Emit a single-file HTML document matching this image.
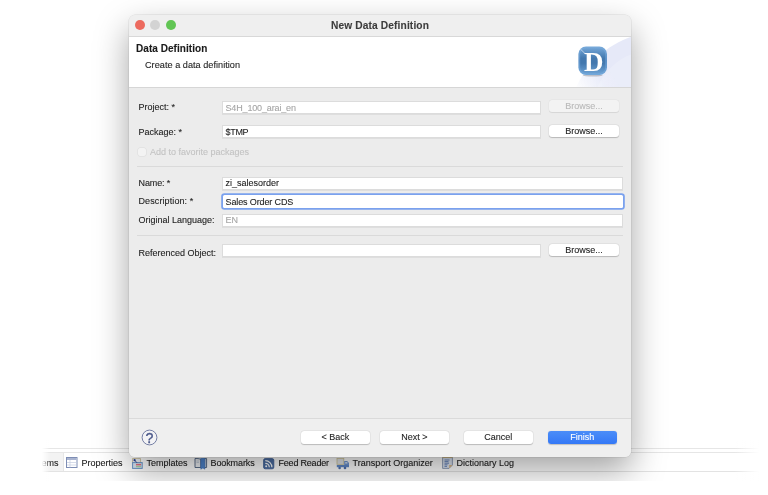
<!DOCTYPE html>
<html><head><meta charset="utf-8">
<style>
html,body{margin:0;padding:0;}
body{width:768px;height:495px;position:relative;overflow:hidden;background:#fff;font-family:"Liberation Sans",sans-serif;color:#242424;}
.abs{position:absolute;}
.t{position:absolute;white-space:nowrap;line-height:12px;font-size:9px;-webkit-text-stroke:0.1px currentColor;}
#stage{left:0;top:0;width:768px;height:481px;overflow:hidden;will-change:transform;}
#tabbar{left:40px;top:452px;width:719px;height:20px;border-top:1px solid #e6e6e6;border-bottom:1px solid #e3e3e3;box-sizing:border-box;background:#f3f3f3;}
#topline{left:40px;top:448.2px;width:719px;height:1px;background:#e6e6e6;}
#tabbar .t{top:3.5px;font-size:9px;color:#1c1c1c;}
#tabbar svg{position:absolute;}
#acttab{left:22.5px;top:0;width:700px;height:18px;background:#fff;border-left:1px solid #e6e6e6;}
#dlg{left:129px;top:14.5px;width:502px;height:442.5px;border-radius:6px;background:#ececec;box-shadow:0 0 0 0.5px rgba(0,0,0,0.11),0 14px 34px rgba(0,0,0,0.36);}
#clip{left:0;top:0;width:502px;height:442.5px;border-radius:6px;overflow:hidden;}
#title{left:0;top:0;width:502px;height:21.5px;background:#efefef;border-bottom:1px solid #d8d8d8;}
#hdr{left:0;top:22.5px;width:502px;height:49.5px;background:#fff;border-bottom:1px solid #d6d6d6;overflow:hidden;}
.dot{position:absolute;width:9.8px;height:9.8px;border-radius:50%;top:5.7px;}
.inp{position:absolute;background:#fff;height:13px;box-sizing:border-box;border:0.5px solid #dcdcdc;box-shadow:0 0.5px 0.5px rgba(0,0,0,0.06);}
.btn{position:absolute;background:#fff;height:12.3px;border-radius:3px;box-shadow:0 0 0 0.5px rgba(0,0,0,0.05),0 0.5px 1px rgba(0,0,0,0.2);text-align:center;font-size:9px;line-height:12.5px;-webkit-text-stroke:0.1px currentColor;}
.sep{position:absolute;height:1px;background:#dadada;left:8px;width:486px;}
</style></head><body>
<div id="stage" class="abs">
<div id="topline" class="abs"></div>
<div id="tabbar" class="abs">
  <div id="acttab" class="abs"></div>
  <div class="t" style="left:1.5px;">ems</div>
  <svg style="left:26px;top:4.4px;" width="12" height="12" viewBox="0 0 12 12">
    <rect x="0.5" y="0.5" width="10.5" height="10" fill="#fff" stroke="#7d8db4" stroke-width="1"/>
    <rect x="1" y="1" width="9.5" height="2" fill="#a9b4d0"/>
    <path d="M4 3V10.5M1 5.5H10.5M1 8H10.5" stroke="#c3cbe0" stroke-width="0.7" fill="none"/>
  </svg>
  <div class="t" style="left:41.5px;">Properties</div>
  <svg style="left:92px;top:4.6px;" width="11" height="11" viewBox="0 0 11 11">
    <path d="M0.5 5V0.5H8.5V5" fill="#eef2f8" stroke="#c9bd95" stroke-width="0.8"/>
    <rect x="0.6" y="4.6" width="9.6" height="5.8" fill="#dbe7f5" stroke="#6b96c9" stroke-width="1"/>
    <rect x="4" y="5.9" width="5" height="1.5" fill="#e2707a"/>
    <rect x="4" y="8" width="5" height="1.2" fill="#a5d6a5"/>
    <circle cx="2.6" cy="2.2" r="1.1" fill="#2c3f8f"/>
    <path d="M2.6 2.2L5 4.8" stroke="#2c3f8f" stroke-width="0.9"/>
  </svg>
  <div class="t" style="left:106.5px;">Templates</div>
  <svg style="left:154px;top:4.6px;" width="14" height="12" viewBox="0 0 14 12">
    <path d="M1 0.5V9.5H7V1.2C5 0.5 3 0.5 1 0.5Z" fill="#eef1f5" stroke="#4c6180" stroke-width="0.9"/>
    <path d="M7 1.2V9.5H12.6V0.5C10.5 0.5 9 0.6 7 1.2Z" fill="#c9d3e0" stroke="#4c6180" stroke-width="0.9"/>
    <path d="M6.8 0.2H10.9V11.2L8.85 10L6.8 11.2Z" fill="#4f86cf" stroke="#3c6fb5" stroke-width="0.5"/>
    <path d="M2.5 3H5M2.5 4.5H5" stroke="#b8c4d6" stroke-width="0.7"/>
  </svg>
  <div class="t" style="left:170.5px;letter-spacing:-0.1px;">Bookmarks</div>
  <svg style="left:223px;top:4.6px;" width="12" height="12" viewBox="0 0 12 12">
    <rect x="0.6" y="0.6" width="10.2" height="10.2" rx="1.6" fill="#4c6fa5" stroke="#3b5c94" stroke-width="0.8"/>
    <circle cx="3.2" cy="8.3" r="1" fill="#fff"/>
    <path d="M2.3 5.3A4 4 0 0 1 6.3 9.3" stroke="#fff" stroke-width="1.2" fill="none"/>
    <path d="M2.3 2.7A6.6 6.6 0 0 1 8.9 9.3" stroke="#fff" stroke-width="1.2" fill="none"/>
  </svg>
  <div class="t" style="left:238.5px;letter-spacing:-0.2px;">Feed Reader</div>
  <svg style="left:296px;top:4.6px;" width="14" height="12" viewBox="0 0 14 12">
    <rect x="1" y="0.5" width="6.8" height="5.8" fill="#e6e9ee" stroke="#cfc596" stroke-width="0.8"/>
    <path d="M8.2 3H11.2L13 5V9H8.2Z" fill="#7198d4"/>
    <rect x="9.2" y="4" width="2.2" height="1.6" fill="#cfe0f5"/>
    <rect x="0.8" y="7" width="12.2" height="2.2" fill="#628bcc"/>
    <circle cx="3.6" cy="10" r="1.3" fill="#4e74b4"/>
    <circle cx="9" cy="10" r="1.3" fill="#4e74b4"/>
  </svg>
  <div class="t" style="left:312.5px;">Transport Organizer</div>
  <svg style="left:402px;top:4.3px;" width="12" height="13" viewBox="0 0 12 13">
    <path d="M0.6 0.6H10.4V8L7 11.4H0.6Z" fill="#dfe7f3" stroke="#8797b5" stroke-width="0.9"/>
    <path d="M0.4 0.5H10.6" stroke="#cbb88c" stroke-width="1"/>
    <path d="M10.6 8H7.2V11.6Z" fill="#d8b98a"/>
    <path d="M2.5 3H7.5M2.5 4.6H6.5M2.5 6.2H7M2.5 7.8H5.5M2.5 9.4H5" stroke="#4e72b4" stroke-width="0.8"/>
  </svg>
  <div class="t" style="left:416.5px;">Dictionary Log</div>
</div>
<div class="abs" style="left:34px;top:440px;width:16px;height:41px;background:linear-gradient(90deg,#fff 0,#fff 50%,rgba(255,255,255,0) 100%);"></div>
<div class="abs" style="left:735px;top:440px;width:30px;height:41px;background:linear-gradient(270deg,#fff 0,#fff 20%,rgba(255,255,255,0) 100%);"></div>

<div id="dlg" class="abs"><div id="clip" class="abs">
  <div id="title" class="abs">
    <div class="dot" style="left:6px;background:#ec6a5e;"></div>
    <div class="dot" style="left:21.3px;background:#d3d3d3;"></div>
    <div class="dot" style="left:36.8px;background:#61c554;"></div>
    <div class="t" style="left:0;width:502px;text-align:center;top:5px;font-weight:bold;font-size:10.2px;letter-spacing:0.13px;color:#3c3c3c;">New Data Definition</div>
  </div>
  <div id="hdr" class="abs">
    <svg class="abs" style="left:422px;top:0;" width="80" height="50" viewBox="0 0 80 50">
      <defs>
        <linearGradient id="sw" gradientUnits="userSpaceOnUse" x1="24" y1="52" x2="56" y2="30"><stop offset="0" stop-color="#e8ebf9" stop-opacity="0"/><stop offset="0.7" stop-color="#e8ebf9" stop-opacity="0.95"/><stop offset="1" stop-color="#e6e9f8"/></linearGradient>
        <filter id="bl" x="-10%" y="-10%" width="120%" height="120%"><feGaussianBlur stdDeviation="0.5"/></filter>
      </defs>
      <path d="M81,-0.5 C55,8 35,28 24.8,51 L81,51Z" fill="url(#sw)" filter="url(#bl)"/>
      <path d="M81,17 C66,22 52,36 46,51 L81,51Z" fill="#fff" opacity="0.18" filter="url(#bl)"/>
    </svg>
    <svg class="abs" style="left:449px;top:8.8px;" width="30" height="32" viewBox="0 0 30 32">
      <defs>
        <linearGradient id="dg" x1="0" y1="0" x2="0" y2="1"><stop offset="0" stop-color="#78aada"/><stop offset="0.5" stop-color="#5a8fc6"/><stop offset="1" stop-color="#73a8da"/></linearGradient>
        <linearGradient id="di" x1="0" y1="0" x2="0" y2="1"><stop offset="0" stop-color="#6fa2d4"/><stop offset="0.4" stop-color="#4378ae"/><stop offset="0.6" stop-color="#4378ae"/><stop offset="1" stop-color="#6a9fd2"/></linearGradient>
      </defs>
      <ellipse cx="14.7" cy="29.3" rx="10" ry="1.3" fill="#000" opacity="0.2"/>
      <rect x="0.4" y="0.5" width="28.6" height="28.6" rx="7.6" fill="url(#dg)"/>
      <rect x="2.2" y="2.3" width="25" height="25" rx="6" fill="url(#di)"/>
      <text x="15.8" y="25" text-anchor="middle" font-family="Liberation Serif,serif" font-weight="bold" font-size="27" fill="#fff">D</text>
      <path d="M2.6 3.2L6.6 7.2" stroke="#fff" stroke-width="0.7" opacity="0.8"/>
    </svg>
    <div class="t" style="left:7px;top:6.2px;font-weight:bold;font-size:10px;color:#1a1a1a;letter-spacing:0.05px;">Data Definition</div>
    <div class="t" style="left:16px;top:21.9px;font-size:9.15px;letter-spacing:0.03px;">Create a data definition</div>
  </div>
  <div class="t" style="left:9.5px;top:86.5px;">Project: *</div>
  <div class="inp" style="left:93px;top:86.5px;width:318.5px;"></div>
  <div class="t" style="left:96.5px;top:87px;color:#a6a6a6;letter-spacing:-0.15px;">S4H_100_arai_en</div>
  <div class="btn" style="left:420.3px;top:85.5px;width:69.5px;color:#b9b9b9;background:#f3f3f3;box-shadow:0 0 0 0.5px rgba(0,0,0,0.03),0 0.5px 0.8px rgba(0,0,0,0.08);">Browse...</div>

  <div class="t" style="left:9.5px;top:111.5px;">Package: *</div>
  <div class="inp" style="left:93px;top:110.8px;width:318.5px;"></div>
  <div class="t" style="left:96.5px;top:111.5px;letter-spacing:-0.3px;">$TMP</div>
  <div class="btn" style="left:420.3px;top:110.2px;width:69.5px;">Browse...</div>

  <div class="abs" style="left:9px;top:133.5px;width:8px;height:8px;border-radius:2px;background:#f3f3f3;box-shadow:0 0 0 0.5px rgba(0,0,0,0.07);"></div>
  <div class="t" style="left:21px;top:131px;color:#c3c3c3;">Add to favorite packages</div>

  <div class="sep" style="top:151.5px;"></div>

  <div class="t" style="left:9.5px;top:162px;letter-spacing:-0.12px;">Name: *</div>
  <div class="inp" style="left:93px;top:162.5px;width:401px;"></div>
  <div class="t" style="left:96.5px;top:162.5px;">zi_salesorder</div>

  <div class="t" style="left:9.5px;top:180.6px;letter-spacing:0.1px;">Description: *</div>
  <div class="inp" style="left:93.5px;top:180.5px;width:400px;height:13.3px;box-shadow:0 0 0 1.8px #7aa1ee;border:0;border-radius:1.5px;"></div>
  <div class="t" style="left:96.5px;top:181px;letter-spacing:-0.12px;">Sales Order CDS</div>

  <div class="t" style="left:9.5px;top:199px;">Original Language:</div>
  <div class="inp" style="left:93px;top:199px;width:401px;"></div>
  <div class="t" style="left:96.5px;top:199.5px;color:#a6a6a6;">EN</div>

  <div class="sep" style="top:220.5px;"></div>

  <div class="t" style="left:9.5px;top:232.5px;">Referenced Object:</div>
  <div class="inp" style="left:93px;top:229.6px;width:318.5px;"></div>
  <div class="btn" style="left:420.3px;top:229.3px;width:69.5px;">Browse...</div>

  <div class="abs" style="left:0;top:404px;width:502px;height:39px;background:#efefef;"></div>
  <div class="sep" style="top:403.5px;left:0;width:502px;"></div>

  <svg class="abs" style="left:11.9px;top:414.2px;" width="17" height="17" viewBox="0 0 17 17">
    <circle cx="8.5" cy="8.5" r="7.4" fill="#f3f3f5" stroke="#66729c" stroke-width="0.9"/>
    <text x="8.5" y="13.6" text-anchor="middle" font-family="Liberation Sans,sans-serif" font-size="14.2" fill="#4a588a" stroke="#4a588a" stroke-width="0.35">?</text>
  </svg>

  <div class="btn" style="left:171.5px;top:416.6px;width:69.6px;height:12.6px;line-height:12.8px;">&lt; Back</div>
  <div class="btn" style="left:250.5px;top:416.6px;width:69.6px;height:12.6px;line-height:12.8px;">Next &gt;</div>
  <div class="btn" style="left:334.5px;top:416.6px;width:69.6px;height:12.6px;line-height:12.8px;">Cancel</div>
  <div class="btn" style="left:418.5px;top:416.6px;width:69.6px;height:12.6px;line-height:12.8px;background:linear-gradient(#4b8df8,#3478f6);color:#fff;box-shadow:0 0.5px 1px rgba(0,0,0,0.2);">Finish</div>
</div></div>
</div>
</body></html>
